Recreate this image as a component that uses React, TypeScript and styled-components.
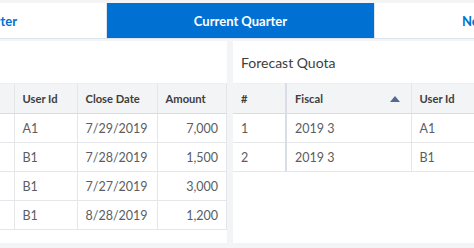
import styled, { createGlobalStyle } from "styled-components";

const GlobalStyle = createGlobalStyle`
  html, body {
    margin: 0;
    padding: 0;
    background: #f3f4f6;
    overflow: hidden;
  }
  body {
    font-family: Lato, "Open Sans", sans-serif;
    color: #3e3e3c;
  }
`;

const Page = styled.div`
  width: 474px;
  height: 248px;
  overflow: hidden;
  padding-top: 3px;
  box-sizing: border-box;
`;

const TabBar = styled.div`
  display: flex;
  height: 35px;
  margin-left: -171px;
  border-bottom: 1px solid #dfe3ea;
`;

const Tab = styled.div<{ $active?: boolean; $width: number }>`
  flex: none;
  width: ${(p) => p.$width}px;
  display: flex;
  align-items: center;
  justify-content: center;
  box-sizing: border-box;
  font-size: 13px;
  font-weight: 700;
  background: ${(p) => (p.$active ? "#0070d2" : "#ffffff")};
  color: ${(p) => (p.$active ? "#ffffff" : "#0070d2")};
  border-right: 1px solid #dfe3ea;
`;

const Panels = styled.div`
  display: flex;
  gap: 6px;
  margin-top: 2px;
  height: 202px;
`;

const Panel = styled.div<{ $offset?: number; $width: number }>`
  flex: none;
  width: ${(p) => p.$width}px;
  margin-left: ${(p) => p.$offset ?? 0}px;
  background: #ffffff;
  display: flex;
  flex-direction: column;
`;

const PanelTitle = styled.div`
  height: 42px;
  display: flex;
  align-items: center;
  padding-left: 8px;
  font-size: 14px;
  color: #3e3e3c;
`;

const Table = styled.table`
  border-collapse: collapse;
  table-layout: fixed;
  width: 100%;
`;

const HeadCell = styled.th<{ $w?: number; $thick?: boolean }>`
  width: ${(p) => (p.$w ? `${p.$w}px` : "auto")};
  height: 30px;
  padding: 0 8px;
  box-sizing: border-box;
  text-align: left;
  font-size: 11.2px;
  font-weight: 700;
  color: #3e3e3c;
  background: #f3f4f6;
  border-bottom: 1px solid #dddbda;
  border-right: ${(p) => (p.$thick ? "2px solid #d8dde6" : "1px solid #e4e6ea")};
  border-top: 1px solid #eef0f3;
  white-space: nowrap;
  overflow: hidden;
`;

const HeadInner = styled.div`
  display: flex;
  align-items: center;
  justify-content: space-between;
`;

const SortArrow = styled.span`
  width: 0;
  height: 0;
  border-left: 5px solid transparent;
  border-right: 5px solid transparent;
  border-bottom: 6px solid #54698d;
  margin-right: 3px;
`;

const Cell = styled.td<{ $right?: boolean; $thick?: boolean }>`
  height: 29px;
  padding: 0 8px;
  box-sizing: border-box;
  font-size: 12.5px;
  color: #5a5d62;
  text-align: ${(p) => (p.$right ? "right" : "left")};
  border-bottom: 1px solid #e4e6ea;
  border-right: ${(p) => (p.$thick ? "2px solid #d8dde6" : "1px solid #e4e6ea")};
  white-space: nowrap;
  overflow: hidden;
`;

const opportunities = [
  { name: "Acme Deal", user: "A1", date: "7/29/2019", amount: "7,000" },
  { name: "Beta Deal", user: "B1", date: "7/28/2019", amount: "1,500" },
  { name: "Core Deal", user: "B1", date: "7/27/2019", amount: "3,000" },
  { name: "Delta Deal", user: "B1", date: "8/28/2019", amount: "1,200" },
];

const quotas = [
  { n: "1", fiscal: "2019 3", user: "A1" },
  { n: "2", fiscal: "2019 3", user: "B1" },
];

export default function App() {
  return (
    <Page>
      <GlobalStyle />
      <TabBar>
        <Tab $width={278}>Previous Quarter</Tab>
        <Tab $width={268} $active>
          Current Quarter
        </Tab>
        <Tab $width={252}>Next Quarter</Tab>
      </TabBar>
      <Panels>
        <Panel $offset={-103} $width={330}>
          <PanelTitle>Opportunities</PanelTitle>
          <Table>
            <thead>
              <tr>
                <HeadCell $w={117}>Name</HeadCell>
                <HeadCell $w={63}>User Id</HeadCell>
                <HeadCell $w={80}>Close Date</HeadCell>
                <HeadCell>Amount</HeadCell>
              </tr>
            </thead>
            <tbody>
              {opportunities.map((o) => (
                <tr key={o.name}>
                  <Cell>{o.name}</Cell>
                  <Cell>{o.user}</Cell>
                  <Cell>{o.date}</Cell>
                  <Cell $right>{o.amount}</Cell>
                </tr>
              ))}
            </tbody>
          </Table>
        </Panel>
        <Panel $width={300}>
          <PanelTitle>Forecast Quota</PanelTitle>
          <Table>
            <thead>
              <tr>
                <HeadCell $w={53} $thick>
                  #
                </HeadCell>
                <HeadCell $w={125}>
                  <HeadInner>
                    Fiscal
                    <SortArrow />
                  </HeadInner>
                </HeadCell>
                <HeadCell>User Id</HeadCell>
              </tr>
            </thead>
            <tbody>
              {quotas.map((q) => (
                <tr key={q.n}>
                  <Cell $thick>{q.n}</Cell>
                  <Cell>{q.fiscal}</Cell>
                  <Cell>{q.user}</Cell>
                </tr>
              ))}
            </tbody>
          </Table>
        </Panel>
      </Panels>
    </Page>
  );
}
